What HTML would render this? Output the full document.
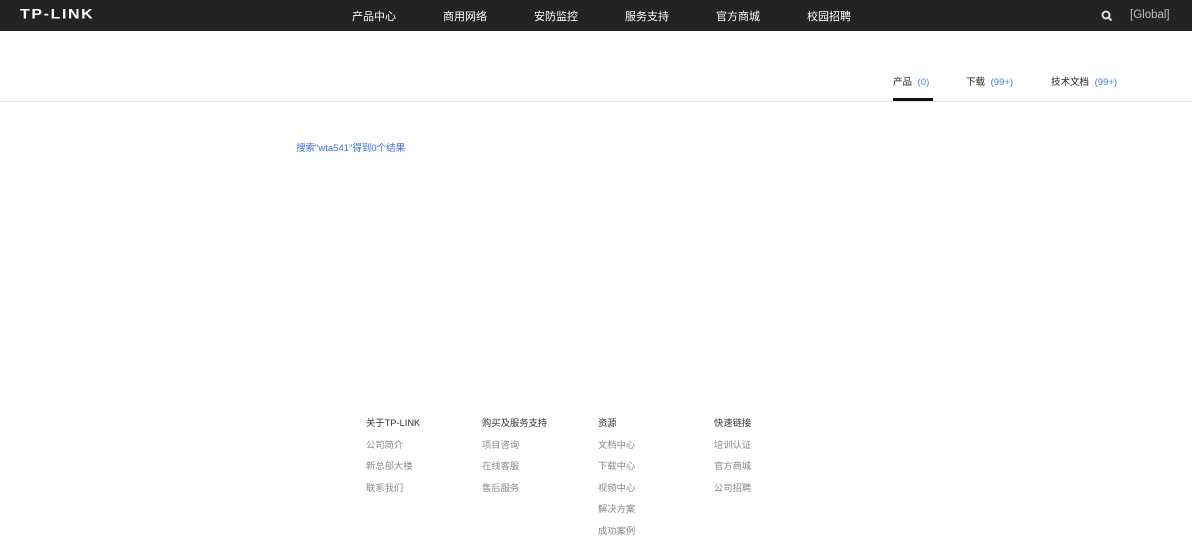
<!DOCTYPE html>
<html><head><meta charset="utf-8"><style>
*{margin:0;padding:0;box-sizing:border-box}
body{width:1192px;height:540px;background:#fff;font-family:"Liberation Sans","Noto Sans CJK SC",sans-serif;position:relative;overflow:hidden}
.nav{position:absolute;left:0;top:0;width:1192px;height:31px;background:#232323}
.logo{position:absolute;left:20px;top:6px;color:#fff;font-weight:bold;font-size:16px;letter-spacing:1.6px;transform:scaleY(0.85);transform-origin:left center}
.nav a{position:absolute;top:8px;color:#fff;font-size:11px;text-decoration:none}
.glob{position:absolute;left:1130px;top:9px;color:#bbb;font-size:11.5px}
.tabs{position:absolute;top:74px;font-size:9.5px;color:#222}
.tabs span{color:#3a7ff0;margin-left:3px}
.line{position:absolute;left:0;top:101px;width:1192px;height:1px;background:#e2e2e2}
.ul{position:absolute;left:893px;top:98px;width:40px;height:3px;background:#111}
.res{position:absolute;left:296px;top:140px;font-size:9.5px;color:#3a6fe0}
.col{position:absolute;top:413px;font-size:9.3px;color:#888;line-height:21.5px}
.col b{font-weight:normal;color:#333}
</style></head><body>
<div class="nav">
<div class="logo">TP-LINK</div>
<a style="left:352px">产品中心</a><a style="left:443px">商用网络</a><a style="left:534px">安防监控</a><a style="left:625px">服务支持</a><a style="left:716px">官方商城</a><a style="left:807px">校园招聘</a>
<svg style="position:absolute;left:1101px;top:10px" width="12" height="12" viewBox="0 0 12 12"><circle cx="5" cy="5" r="3.5" stroke="#ddd" stroke-width="2" fill="none"/><path d="M7.5 7.5L10.5 10.5" stroke="#ddd" stroke-width="2.2"/></svg>
<div class="glob">[Global]</div>
</div>
<div class="tabs" style="left:893px">产品 <span>(0)</span></div>
<div class="tabs" style="left:966px">下载 <span>(99+)</span></div>
<div class="tabs" style="left:1051px">技术文档 <span>(99+)</span></div>
<div class="line"></div><div class="ul"></div>
<div class="res">搜索"wta541"得到0个结果</div>
<div class="col" style="left:366px"><b>关于TP-LINK</b><br>公司简介<br>新总部大楼<br>联系我们</div>
<div class="col" style="left:482px"><b>购买及服务支持</b><br>项目咨询<br>在线客服<br>售后服务</div>
<div class="col" style="left:598px"><b>资源</b><br>文档中心<br>下载中心<br>视频中心<br>解决方案<br>成功案例</div>
<div class="col" style="left:714px"><b>快速链接</b><br>培训认证<br>官方商城<br>公司招聘</div>
</body></html>
